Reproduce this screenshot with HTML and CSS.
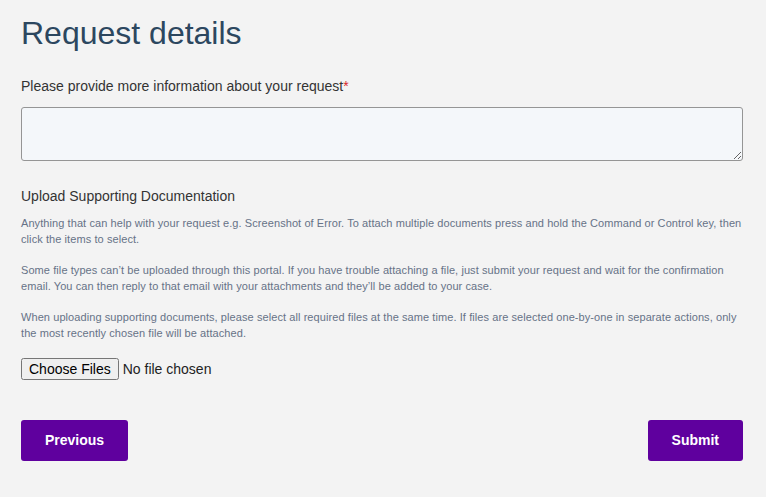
FILE: index.html
```html
<!DOCTYPE html>
<html lang="en">
<head>
<meta charset="utf-8">
<title>Request details</title>
<link rel="stylesheet" href="styles.css">
</head>
<body>
<main class="page">
  <h1 class="title">Request details</h1>
  <label class="label" for="info">Please provide more information about your request<span class="req">*</span></label>
  <textarea id="info" class="textarea"></textarea>
  <h2 class="subhead">Upload Supporting Documentation</h2>
  <p class="help">Anything that can help with your request e.g. Screenshot of Error. To attach multiple documents press and hold the Command or Control key, then click the items to select.</p>
  <p class="help">Some file types can’t be uploaded through this portal. If you have trouble attaching a file, just submit your request and wait for the confirmation email. You can then reply to that email with your attachments and they’ll be added to your case.</p>
  <p class="help">When uploading supporting documents, please select all required files at the same time. If files are selected one-by-one in separate actions, only the most recently chosen file will be attached.</p>
  <div class="file-row"><input class="file" type="file" multiple></div>
  <div class="actions">
    <button class="btn" type="button">Previous</button>
    <button class="btn" type="button">Submit</button>
  </div>
</main>
</body>
</html>
```
FILE: styles.css
```css
html, body {
  margin: 0;
  padding: 0;
  background: #f3f3f3;
}
body {
  font-family: "Liberation Sans", Arial, sans-serif;
  color: #333;
}
.page {
  padding: 15px 23px 0 21px;
  display: flex;
  flex-direction: column;
}
.title {
  margin: 0;
  font-size: 32px;
  line-height: 37px;
  font-weight: normal;
  color: #2c475f;
}
.label {
  margin-top: 26px;
  font-size: 14px;
  line-height: 16px;
  color: #333;
}
.req {
  color: #d9262c;
}
.textarea {
  margin: 13px 0 0 0;
  box-sizing: border-box;
  height: 54px;
  width: 100%;
  border: 1px solid #959595;
  border-radius: 3px;
  background: #f4f7fa;
  font-family: inherit;
  font-size: 14px;
  display: block;
}
.subhead {
  margin: 27px 0 0;
  font-size: 14px;
  line-height: 16px;
  font-weight: normal;
  color: #333;
}
.help {
  margin: 11px 0 4px;
  font-size: 11px;
  line-height: 16px;
  letter-spacing: 0.08px;
  color: #667287;
}
.help + .help {
  margin-top: 11px;
}
.file-row {
  margin-top: 13px;
  display: flex;
  align-items: flex-start;
}
.file {
  font-family: "Liberation Sans", Arial, sans-serif;
  font-size: 14px;
  color: #222;
  margin: 0;
}
.actions {
  margin-top: 40px;
  display: flex;
  justify-content: space-between;
}
.btn {
  background: #5f009e;
  color: #fff;
  border: none;
  border-radius: 3px;
  padding: 12px 24px;
  font-family: "Liberation Sans", Arial, sans-serif;
  font-weight: bold;
  font-size: 14px;
  line-height: 17px;
  cursor: pointer;
}
```
